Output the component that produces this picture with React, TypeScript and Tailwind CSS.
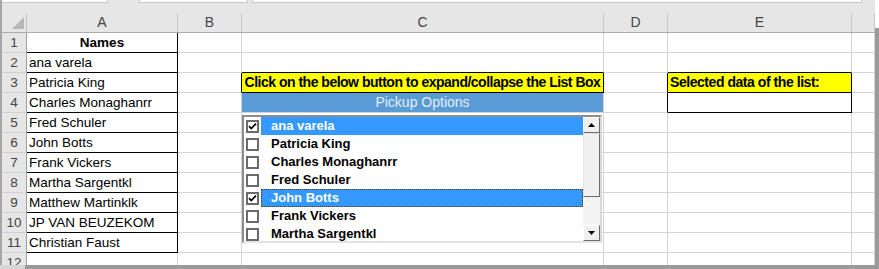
import React from "react";

const font = "font-['Liberation_Sans',Arial,sans-serif]";

const colW = ["w-[151px]", "w-[64px]", "w-[362px]", "w-[64px]", "w-[184px]", "w-[23px]"];
const colLetters = ["A", "B", "C", "D", "E", ""];

const names = [
  "ana varela",
  "Patricia King",
  "Charles Monaghanrr",
  "Fred Schuler",
  "John Botts",
  "Frank Vickers",
  "Martha Sargentkl",
  "Matthew Martinklk",
  "JP VAN BEUZEKOM",
  "Christian Faust",
];

const listItems = [
  { name: "ana varela", checked: true, selected: true },
  { name: "Patricia King" },
  { name: "Charles Monaghanrr" },
  { name: "Fred Schuler" },
  { name: "John Botts", checked: true, selected: true, focus: true },
  { name: "Frank Vickers" },
  { name: "Martha Sargentkl" },
];

// which cells carry a black border (row, col)
function blackRight(r: number, c: number) {
  if (c === 0 && r >= 1 && r <= 11) return true;
  if ((c === 1 || c === 2) && r === 3) return true;
  if ((c === 3 || c === 4) && (r === 3 || r === 4)) return true;
  return false;
}
function blackBottom(r: number, c: number) {
  if (c === 0 && r >= 1 && r <= 11) return true;
  if (c === 2 && (r === 2 || r === 3)) return true;
  if (c === 4 && r >= 2 && r <= 4) return true;
  return false;
}

function Cell({ r, c }: { r: number; c: number }) {
  const right = blackRight(r, c) ? "border-r-black" : "border-r-[#d4d4d4]";
  const bottom = blackBottom(r, c) ? "border-b-black" : "border-b-[#d4d4d4]";
  let content: React.ReactNode = null;
  let extra = "bg-white";

  if (c === 0 && r === 1) {
    content = <span className="block text-center font-bold">Names</span>;
  } else if (c === 0 && r >= 2 && r <= 11) {
    content = <span className="pl-[2px]">{names[r - 2]}</span>;
  } else if (c === 2 && r === 3) {
    extra = "bg-[#ffff00]";
    content = (
      <span className="block text-center font-bold text-[14px] tracking-[-0.5px]">
        Click on the below button to expand/collapse the List Box
      </span>
    );
  } else if (c === 2 && r === 4) {
    content = (
      <button className="w-full h-full bg-[#5b9bd5] text-[#e4edf8] text-[14px] leading-[19px] text-center">
        Pickup Options
      </button>
    );
  } else if (c === 4 && r === 3) {
    extra = "bg-[#ffff00]";
    content = <span className="pl-[2px] font-bold text-[14px] tracking-[-0.45px]">Selected data of the list:</span>;
  }

  return (
    <div
      className={`${colW[c]} shrink-0 h-full border-r border-b ${right} ${bottom} ${extra} text-black text-[13.5px] leading-[19px] overflow-hidden whitespace-nowrap`}
    >
      {content}
    </div>
  );
}

function CheckBox({ checked }: { checked?: boolean }) {
  return (
    <div className="w-[13px] h-[13px] shrink-0 border-2 border-[#6b6b6b] bg-white flex items-center justify-center">
      {checked && (
        <svg width="9" height="9" viewBox="0 0 9 9">
          <path d="M1 4.2 L3.3 6.6 L8 1.6" fill="none" stroke="#000" strokeWidth="1.7" />
        </svg>
      )}
    </div>
  );
}

function ScrollButton({ up }: { up?: boolean }) {
  return (
    <div className="h-[16px] shrink-0 bg-[#f0f0f0] border border-t-white border-l-white border-r-[#6b6b6b] border-b-[#6b6b6b] flex items-center justify-center">
      <svg width="7" height="4" viewBox="0 0 7 4">
        {up ? <path d="M0 4 L3.5 0 L7 4 Z" fill="#000" /> : <path d="M0 0 L3.5 4 L7 0 Z" fill="#000" />}
      </svg>
    </div>
  );
}

function ListBox() {
  return (
    <div className="absolute left-[242px] top-[115px] w-[360px] h-[128px] border-2 border-t-[#8c8c8c] border-l-[#8c8c8c] border-r-[#d9d9d9] border-b-[#e3e3e3] bg-white flex overflow-hidden">
      <div className="flex-1 flex flex-col overflow-hidden">
        {listItems.map((it) => (
          <div key={it.name} className="h-[18px] shrink-0 flex items-center">
            <div className="pl-[2px] pr-[2px]">
              <CheckBox checked={it.checked} />
            </div>
            <div
              className={`flex-1 h-full flex items-center pl-[10px] font-bold text-[13px] ${
                it.selected ? "bg-[#3399ff] text-white" : "text-black"
              } ${it.focus ? "border border-dotted border-[#5a3a00]" : ""}`}
            >
              <span className={it.focus ? "-ml-[1px]" : ""}>{it.name}</span>
            </div>
          </div>
        ))}
      </div>
      <div className="w-[17px] shrink-0 flex flex-col">
        <ScrollButton up />
        <div className="h-[64px] shrink-0 bg-[#f0f0f0] border border-t-[#e3e3e3] border-l-[#e3e3e3] border-r-[#6b6b6b] border-b-[#6b6b6b]" />
        <div className="flex-1 bg-[repeating-conic-gradient(#e9e9e9_0_25%,#ffffff_0_50%)] bg-[length:2px_2px]" />
        <ScrollButton />
      </div>
    </div>
  );
}

export default function App() {
  const rows = [1, 2, 3, 4, 5, 6, 7, 8, 9, 10, 11, 12];
  return (
    <div className={`w-[879px] h-[269px] overflow-hidden bg-white ${font}`}>
      <div className="flex h-[265px]">
        <div className="relative w-[875px] h-[265px] overflow-hidden flex">
          <div className="w-[2px] shrink-0 bg-[#a6a6a6]" />
          <div className="flex-1 flex flex-col bg-[#e6e6e6]">
            {/* formula bar edges */}
            <div className="h-[13px] shrink-0 flex items-start">
              <div className="w-[106px] h-[3px] bg-white border-b border-r border-[#c6c6c6]" />
              <div className="w-[31px]" />
              <div className="w-[109px] h-[3px] bg-white border-b border-l border-r border-[#c6c6c6]" />
              <div className="w-[4px]" />
              <div className="w-[610px] h-[3px] bg-white border-b border-l border-r border-[#c6c6c6]" />
            </div>
            {/* column headers */}
            <div className="h-[20px] shrink-0 flex border-b border-[#ababab] text-[#444] text-[14px]">
              <div className="w-[25px] shrink-0 border-r border-[#c6c6c6] relative">
                <svg className="absolute left-[10px] top-[4px]" width="12" height="12" viewBox="0 0 12 12">
                  <path d="M12 0 L12 12 L0 12 Z" fill="#b7b7b7" />
                </svg>
              </div>
              {colLetters.map((l, i) => (
                <div
                  key={i}
                  className={`${colW[i]} shrink-0 h-full flex items-center justify-center border-r border-[#c6c6c6]`}
                >
                  {l}
                </div>
              ))}
            </div>
            {rows.map((r) => (
              <div key={r} className="h-[20px] shrink-0 flex">
                <div className="w-[25px] shrink-0 border-r border-b border-r-[#9e9e9e] border-b-[#d0d0d0] text-[#444] text-[13.5px] leading-[19px] text-center">
                  {r}
                </div>
                {colW.map((_, c) => (
                  <Cell key={c} r={r} c={c} />
                ))}
              </div>
            ))}
          </div>
          <ListBox />
        </div>
        <div className="w-[4px] shrink-0 flex flex-col">
          <div className="h-[28px] bg-white" />
          <div className="flex-1 bg-[#9a9a9a]" />
        </div>
      </div>
      <div className="flex h-[4px]">
        <div className="w-[25px] bg-[#d6d6d6]" />
        <div className="flex-1 bg-[#9a9a9a]" />
      </div>
    </div>
  );
}
